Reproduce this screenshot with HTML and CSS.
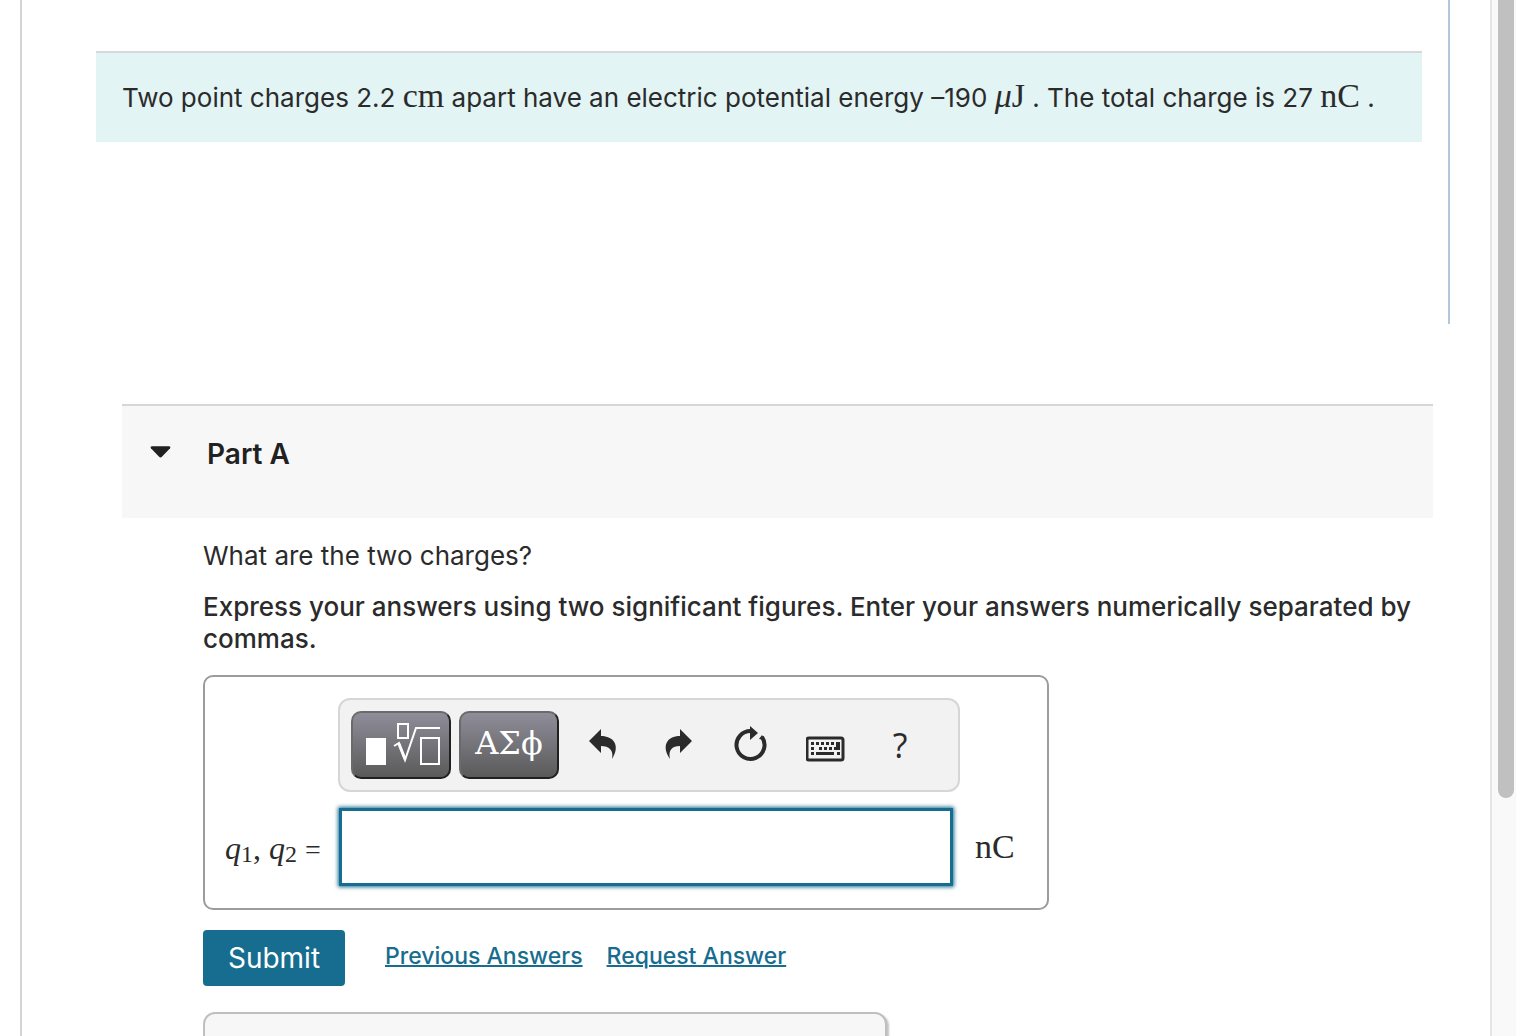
FILE: index.html
```html
<!DOCTYPE html>
<html lang="en">
<head>
<meta charset="utf-8">
<meta name="viewport" content="width=device-width, initial-scale=1">
<title>Part A</title>
<link rel="stylesheet" href="styles.css">
</head>
<body>
<main class="page">
  <section class="intro">
    <p class="problem">Two point charges 2.2 <span class="math">cm</span> apart have an electric potential energy –190 <span class="math"><i>μ</i>J</span> . The total charge is 27 <span class="math">nC</span> .</p>
  </section>
  <section class="part">
    <header class="part-header">
      <svg class="caret" viewBox="0 0 22 14" aria-hidden="true"><path d="M2 1H20Q22 1 21 3L12.500 12Q11 13.500 9.500 12L1 3Q0 1 2 1Z"/></svg>
      <h2 class="part-title">Part A</h2>
    </header>
    <div class="part-body">
      <p class="question">What are the two charges?</p>
      <p class="instruction">Express your answers using two significant figures. Enter your answers numerically separated by commas.</p>
      <form class="answer-form">
        <div class="answer-box">
          <div class="toolbar">
            <button class="tool key" type="button" aria-label="Templates">
              <svg class="template-icon" viewBox="0 0 76 44" aria-hidden="true">
                <rect class="solid" x="3" y="15" width="20" height="27"/>
                <rect x="35" y="1" width="10" height="14"/>
                <path d="M31 23L36 20L42 37L53 5H77"/>
                <path class="thick" d="M36 21L42 36"/>
                <rect x="58" y="15" width="18" height="26"/>
              </svg>
            </button>
            <button class="tool key greek" type="button" aria-label="Symbols">ΑΣϕ</button>
            <button class="tool" type="button" aria-label="Undo">
              <svg class="icon" viewBox="0 0 40 40" aria-hidden="true"><path d="M5 16L17 4V11C29 11 37 20 28 34C30 25 25 21 17 21V28Z"/></svg>
            </button>
            <button class="tool" type="button" aria-label="Redo">
              <svg class="icon" viewBox="0 0 40 40" aria-hidden="true"><path d="M34 16L22 4V11C9 11 3 21 12 34C10 25 14 21 22 21V28Z"/></svg>
            </button>
            <button class="tool" type="button" aria-label="Reset">
              <svg class="icon" viewBox="0 0 40 40" aria-hidden="true"><path class="ring" d="M19 6A14 14 0 1 0 30 12"/><path d="M18 1L26 8L18 15ZM27 14L30 10L33 15Z"/></svg>
            </button>
            <button class="tool" type="button" aria-label="Keyboard shortcuts">
              <svg class="icon" viewBox="0 0 40 40" aria-hidden="true"><rect class="frame" x="1" y="13" width="36" height="22" rx="2"/><path class="keys" d="M5 18.500H28M5 23.500H10M13 23.500H26M5 28.500H8M31 28.500H34"/><path d="M10 27H28V30H10ZM30 17H34V25H28V22H30Z"/></svg>
            </button>
            <button class="tool help" type="button" aria-label="Help">?</button>
          </div>
          <label class="answer-label math" for="answer"><i>q</i><sub>1</sub>, <i>q</i><sub>2</sub> <span class="equals">=</span></label>
          <input class="answer-input" id="answer" type="text">
          <span class="answer-unit math">nC</span>
        </div>
        <div class="actions">
          <button class="submit" type="button">Submit</button>
          <a class="action-link" href="#previous">Previous Answers</a>
          <a class="action-link" href="#request">Request Answer</a>
        </div>
      </form>
      <div class="feedback"></div>
    </div>
  </section>
</main>
<div class="scrollbar"><div class="thumb"></div></div>
</body>
</html>
```
FILE: styles.css
```css
* { box-sizing: border-box; }

body {
  display: flex;
  height: 100vh;
  margin: 0;
  overflow: hidden;
  background: #fff;
  color: #2b2b2b;
  font-family: Inter, "Liberation Sans", sans-serif;
  font-size: 26px;
  line-height: 32px;
}

p, h2 { margin: 0; }

.page {
  flex: 1;
  min-width: 0;
  margin-left: 20px;
  overflow: hidden;
  border-left: 2px solid #d4d4d4;
}

.intro {
  margin-right: 40px;
  padding: 51px 26px 182px 74px;
  border-right: 2px solid #b3c7d9;
}

.problem {
  padding: 29px 26px 28px;
  border-top: 2px solid #d6d9d9;
  background: #e2f4f4;
}

.math {
  font-family: "Liberation Serif", serif;
  font-size: 34px;
  line-height: 24px;
}

.part { margin: 80px 57px 0 100px; }

.part-header {
  display: flex;
  gap: 36px;
  padding: 32px 28px 48px;
  border-top: 2px solid #d6d6d6;
  background: #f7f7f7;
}

.caret {
  width: 21px;
  height: 14px;
  margin-top: 7px;
  fill: #212121;
}

.part-title {
  color: #212121;
  font-size: 28px;
  font-weight: 600;
  line-height: 32px;
}

.part-body { padding: 22px 0 0 81px; }

.question { margin-bottom: 19px; }

.instruction { font-weight: 500; }

.answer-box {
  display: grid;
  grid-template-columns: 113px minmax(0, 1fr) 72px;
  row-gap: 16px;
  align-items: center;
  max-width: 846px;
  margin-top: 20px;
  padding: 21px 0 22px 20px;
  border: 2px solid #9c9c9c;
  border-radius: 10px;
}

.toolbar {
  grid-column: 2;
  display: flex;
  align-items: center;
  width: 622px;
  height: 94px;
  padding-left: 11px;
  border: 2px solid #d6d6d6;
  border-radius: 12px;
  background: #f2f2f2;
}

.tool {
  display: flex;
  align-items: center;
  justify-content: center;
  width: 74px;
  height: 68px;
  padding: 0;
  border: 0;
  background: none;
  color: #2b2b2b;
  font-family: inherit;
}

.key {
  width: 100px;
  margin-right: 8px;
  border: 2px solid;
  border-color: #6a6a6a #202020 #202020 #6a6a6a;
  border-radius: 10px;
  background: linear-gradient(#8f8d99, #5a5a5a);
  color: #fff;
}

.template-icon {
  width: 76px;
  height: 44px;
  overflow: visible;
  fill: none;
  stroke: #fff;
  stroke-width: 2;
}

.template-icon .solid { fill: #fff; stroke: none; }
.template-icon .thick { stroke-width: 3; }

.greek {
  padding-bottom: 4px;
  font-family: "DejaVu Serif", serif;
  font-size: 32px;
}

.icon {
  width: 40px;
  height: 40px;
  fill: #2b2b2b;
}

.ring, .frame, .keys { fill: none; stroke: #2b2b2b; stroke-width: 4; }
.frame { stroke-width: 3; }
.keys { stroke-width: 3; stroke-dasharray: 3 2; }

.help {
  font-family: "Open Sans", sans-serif;
  font-size: 34px;
}

.answer-label {
  grid-column: 1;
  padding-top: 4px;
  font-size: 32px;
  line-height: 32px;
  white-space: nowrap;
}

.answer-label sub {
  font-size: 24px;
  line-height: 0;
  vertical-align: -3px;
}

.equals { font-size: 28px; }

.answer-input {
  width: 614px;
  height: 78px;
  margin: 0 1px;
  padding: 0 12px;
  border: 3px solid #176d8f;
  outline: 0;
  box-shadow: 0 0 4px 1px #176d8f;
  font: inherit;
}

.answer-unit { line-height: 32px; }

.actions {
  display: flex;
  align-items: center;
  gap: 24px;
  margin-top: 20px;
}

.submit {
  width: 142px;
  height: 56px;
  margin-right: 16px;
  padding: 0;
  border: 0;
  border-radius: 4px;
  background: #176d8f;
  color: #fff;
  font-family: inherit;
  font-size: 28px;
}

.action-link {
  padding-bottom: 4px;
  color: #176d8f;
  font-size: 23px;
  font-weight: 500;
  text-decoration-thickness: 2px;
}

.feedback {
  max-width: 684px;
  height: 120px;
  margin-top: 26px;
  border: 2px solid #bfbfbf;
  border-radius: 12px;
  background: #f7f7f7;
  box-shadow: 2px 2px 2px #c4c4c4;
}

.scrollbar {
  width: 26px;
  padding: 0 2px 0 6px;
  border-left: 2px solid #e5e5e5;
  background: #f9f9f9;
}

.thumb {
  height: 77vh;
  border-radius: 0 0 8px 8px;
  background: #c0c0c0;
}
```
